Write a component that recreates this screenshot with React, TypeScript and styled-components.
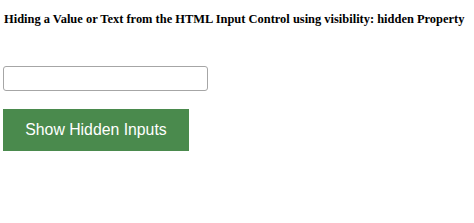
import React from "react";
import styled, { createGlobalStyle } from "styled-components";

const Global = createGlobalStyle`
  html, body { margin: 0; padding: 0; background: #fff; }
`;

const Page = styled.div`
  display: flex;
  flex-direction: column;
  align-items: flex-start;
  padding: 12px 3px 0 3px;
`;

const Title = styled.h1`
  margin: 0 0 0 1px;
  font-family: "Liberation Serif", serif;
  font-weight: bold;
  font-size: 12.45px;
  line-height: 15px;
  color: #000;
  white-space: nowrap;
`;

const TextInput = styled.input`
  margin-top: 39px;
  box-sizing: border-box;
  width: 205px;
  height: 25px;
  border: 1px solid #a6a6a6;
  border-radius: 3px;
  background: #fff;
  outline: none;
`;

const Button = styled.button`
  margin-top: 18px;
  width: 186px;
  height: 42px;
  border: none;
  background: #4a8a4d;
  color: #fff;
  font-family: "Liberation Sans", Arial, sans-serif;
  font-size: 15.8px;
  padding: 0;
  cursor: pointer;
`;

export default function App() {
  return (
    <>
      <Global />
      <Page>
        <Title>Hiding a Value or Text from the HTML Input Control using visibility: hidden Property</Title>
        <TextInput type="text" />
        <Button>Show Hidden Inputs</Button>
      </Page>
    </>
  );
}
